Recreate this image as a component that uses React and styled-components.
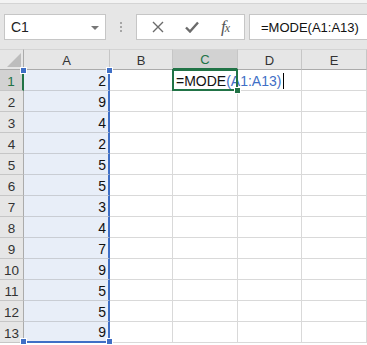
import styled, { createGlobalStyle } from 'styled-components';

const GlobalStyle = createGlobalStyle`
    html, body {
        margin: 0;
        padding: 0;
        background: #ffffff;
        font-family: "Liberation Sans", Arial, sans-serif;
        overflow: hidden;
    }
`;

const GREEN = '#217346';
const BLUE = '#3f6fc6';
const GRID = '#d9d9d9';

const StPage = styled.div`
    width: 367px;
    height: 345px;
    overflow: hidden;
    background: #fff;
`;

const StTopStrip = styled.div`
    height: 3px;
    background: #f3f3f3;
    border-bottom: 1px solid #d4d4d4;
`;

const StToolbar = styled.div`
    height: 45px;
    box-sizing: border-box;
    padding: 10px 0 0 4px;
    background: #e6e6e6;
    display: flex;
    align-items: flex-start;
`;

const StNameBox = styled.div`
    width: 102px;
    height: 26px;
    box-sizing: border-box;
    background: #fff;
    border: 1px solid #c6c6c6;
    display: flex;
    align-items: center;
    justify-content: space-between;
    padding: 0 6px 0 6px;
    font-size: 14px;
    color: #222;
`;

const StArrow = styled.span`
    width: 0;
    height: 0;
    border-left: 4px solid transparent;
    border-right: 4px solid transparent;
    border-top: 4px solid #777;
    margin-top: 1px;
`;

const StGrip = styled.div`
    width: 30px;
    height: 26px;
    display: flex;
    flex-direction: column;
    align-items: center;
    justify-content: center;
    gap: 2px;

    span {
        width: 2px;
        height: 2px;
        background: #a6a6a6;
    }
`;

const StButtons = styled.div`
    width: 109px;
    height: 26px;
    box-sizing: border-box;
    background: #fff;
    border: 1px solid #c6c6c6;
    display: flex;
    align-items: center;
    justify-content: space-around;
    padding: 0 4px;
    margin-right: 4px;
    color: #6b6b6b;
`;

const StFx = styled.span`
    font-family: "Liberation Serif", "Times New Roman", serif;
    font-style: italic;
    font-size: 17px;
    color: #555;
    letter-spacing: -1px;

    small {
        font-size: 12px;
    }
`;

const StFormula = styled.div`
    flex: 1;
    height: 26px;
    box-sizing: border-box;
    background: #fff;
    border: 1px solid #c6c6c6;
    border-right: none;
    display: flex;
    align-items: center;
    padding-left: 11px;
    font-size: 13px;
    color: #111;
`;

const StGrid = styled.div`
    display: grid;
    grid-template-columns: 24px 86px 63px 65px 64px 65px;
    grid-auto-rows: 21px;
`;

const StCorner = styled.div`
    box-sizing: border-box;
    background: #e6e6e6;
    border-top: 1px solid #d4d4d4;
    border-bottom: 1px solid #ababab;
    border-right: 1px solid #ababab;
    display: flex;
    align-items: flex-end;
    justify-content: flex-end;
    padding: 0 2px 2px 0;
`;

const StColHead = styled.div`
    box-sizing: border-box;
    background: ${(p) => (p.$active ? '#d2d2d2' : '#e6e6e6')};
    border-top: 1px solid #d4d4d4;
    border-right: 1px solid #c6c6c6;
    border-bottom: ${(p) => (p.$active ? `2px solid ${GREEN}` : '1px solid #ababab')};
    display: flex;
    align-items: center;
    justify-content: center;
    font-size: 13px;
    color: ${(p) => (p.$active ? GREEN : '#333')};
    padding-top: 1px;
`;

const StRowHead = styled.div`
    box-sizing: border-box;
    background: ${(p) => (p.$active ? '#d2d2d2' : '#e6e6e6')};
    border-bottom: 1px solid #c6c6c6;
    border-right: ${(p) => (p.$active ? `2px solid ${GREEN}` : '1px solid #ababab')};
    display: flex;
    align-items: center;
    justify-content: center;
    font-size: 13.5px;
    color: ${(p) => (p.$active ? GREEN : '#333')};
    padding-top: 2px;
`;

const StCell = styled.div`
    position: relative;
    box-sizing: border-box;
    background: ${(p) => (p.$inRange ? '#e8eef8' : '#fff')};
    border-right: ${(p) => (p.$inRange ? `2px solid ${BLUE}` : `1px solid ${GRID}`)};
    border-bottom: ${(p) => (p.$last ? `2px solid ${BLUE}` : `1px solid ${p.$inRange ? '#c9cdd4' : GRID}`)};
    display: flex;
    align-items: flex-end;
    justify-content: flex-end;
    padding: 0 2px 1px 0;
    font-size: 14px;
    color: #111;
    z-index: ${(p) => (p.$active ? 2 : 'auto')};
`;

const StHandle = styled.span`
    position: absolute;
    width: 5px;
    height: 5px;
    background: ${(p) => p.$color};
    border: 1px solid #fff;
    ${(p) => p.$pos}
    z-index: 3;
`;

const StActiveBox = styled.div`
    position: absolute;
    top: -1px;
    left: -1px;
    right: -1px;
    bottom: -1px;
    border: 2px solid ${GREEN};
    pointer-events: none;
`;

const StEditText = styled.div`
    position: absolute;
    left: 3px;
    bottom: 1px;
    white-space: nowrap;
    font-size: 14px;
    color: #111;
    display: flex;
    align-items: center;

    em {
        font-style: normal;
        color: ${BLUE};
    }
`;

const StCaret = styled.span`
    display: inline-block;
    width: 1px;
    height: 16px;
    background: #000;
    margin-left: 2px;
`;

const columns = ['A', 'B', 'C', 'D', 'E'];
const values = [2, 9, 4, 2, 5, 5, 3, 4, 7, 9, 5, 5, 9];

const App = () => {
    return (
        <StPage>
            <GlobalStyle />
            <StTopStrip />
            <StToolbar>
                <StNameBox>
                    C1
                    <StArrow />
                </StNameBox>
                <StGrip>
                    <span />
                    <span />
                    <span />
                </StGrip>
                <StButtons>
                    <svg width="12" height="12" viewBox="0 0 12 12">
                        <path d="M1 1L11 11M11 1L1 11" stroke="#6b6b6b" strokeWidth="1.4" />
                    </svg>
                    <svg width="14" height="12" viewBox="0 0 14 12">
                        <path d="M1 6.5L5 10.5L13 1.5" stroke="#6b6b6b" strokeWidth="2.4" fill="none" />
                    </svg>
                    <StFx>
                        f<small>x</small>
                    </StFx>
                </StButtons>
                <StFormula>=MODE(A1:A13)</StFormula>
            </StToolbar>

            <StGrid>
                <StCorner>
                    <svg width="14" height="14" viewBox="0 0 14 14">
                        <path d="M14 0L14 14L0 14Z" fill="#bdbdbd" />
                    </svg>
                </StCorner>
                {columns.map((col) => (
                    <StColHead key={col} $active={col === 'C'}>
                        {col}
                    </StColHead>
                ))}

                {values.map((v, i) => {
                    const row = i + 1;
                    const first = row === 1;
                    const last = row === values.length;
                    return [
                        <StRowHead key={`h${row}`} $active={first}>
                            {row}
                        </StRowHead>,
                        <StCell key={`a${row}`} $inRange $last={last}>
                            {v}
                            {first && (
                                <>
                                    <StHandle $color={BLUE} $pos="top: -3px; left: -4px;" />
                                    <StHandle $color={BLUE} $pos="top: -3px; right: -5px;" />
                                </>
                            )}
                            {last && (
                                <>
                                    <StHandle $color={BLUE} $pos="bottom: -4px; left: -4px;" />
                                    <StHandle $color={BLUE} $pos="bottom: -4px; right: -5px;" />
                                </>
                            )}
                        </StCell>,
                        <StCell key={`b${row}`} />,
                        <StCell key={`c${row}`} $active={first}>
                            {first && (
                                <>
                                    <StEditText>
                                        =MODE<em>(A1:A13)</em>
                                        <StCaret />
                                    </StEditText>
                                    <StActiveBox />
                                    <StHandle $color={GREEN} $pos="bottom: -4px; right: -4px;" />
                                </>
                            )}
                        </StCell>,
                        <StCell key={`d${row}`} />,
                        <StCell key={`e${row}`} />,
                    ];
                })}
            </StGrid>
        </StPage>
    );
};

export default App;
